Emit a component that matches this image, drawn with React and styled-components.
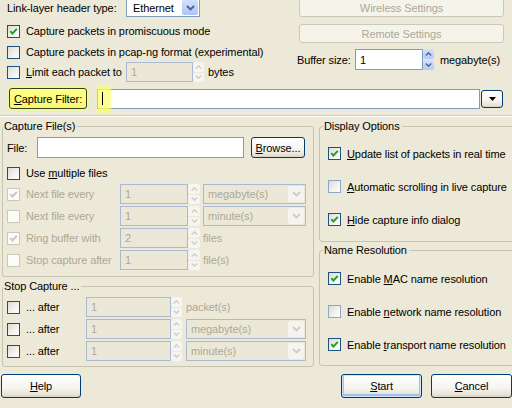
import styled, { createGlobalStyle } from "styled-components";

const GlobalStyle = createGlobalStyle`
  html, body {
    margin: 0;
    padding: 0;
    background: #ece9d8;
  }
  body {
    font-family: "Liberation Sans", Arial, sans-serif;
    font-size: 11px;
  }
`;

const Dialog = styled.div`
  width: 512px;
  height: 408px;
  overflow: hidden;
  background: #ece9d8;
  color: #000;
  font-family: "Liberation Sans", Arial, sans-serif;
  font-size: 11px;
  letter-spacing: -0.1px;
  display: flex;
  flex-direction: column;
`;

const Top = styled.div`
  display: flex;
  margin-top: -2px;
  padding: 0 8px 0 7px;
`;

const TopLeft = styled.div`
  flex: 1;
  display: flex;
  flex-direction: column;
`;

const TopRight = styled.div`
  width: 207px;
  display: flex;
  flex-direction: column;
`;

const Row = styled.div`
  display: flex;
  align-items: center;
  height: ${(p) => p.$h || 20}px;
  margin-top: ${(p) => p.$mt || 0}px;
  margin-left: ${(p) => p.$ml || 0}px;
  flex: none;
`;

const Text = styled.span`
  display: inline-block;
  width: ${(p) => (p.$w ? `${p.$w}px` : "auto")};
  margin-left: ${(p) => p.$ml || 0}px;
  color: ${(p) => (p.$disabled ? "#aca899" : "#000")};
  white-space: nowrap;
  flex: none;
`;

const Box = styled.span`
  box-sizing: border-box;
  width: 13px;
  height: 13px;
  flex: none;
  display: inline-flex;
  align-items: center;
  justify-content: center;
  border: 1px solid
    ${(p) => (p.$disabled ? "#cac8bb" : p.$faint ? "#8fa6c4" : "#1c5180")};
  background: ${(p) =>
    p.$disabled
      ? "#fbfbf8"
      : "linear-gradient(135deg, #dcdcd7 0%, #f2f1ec 55%, #ffffff 100%)"};
`;

const CheckField = styled.span`
  display: inline-flex;
  align-items: center;
  gap: 6px;
  width: ${(p) => (p.$w ? `${p.$w}px` : "auto")};
  color: ${(p) => (p.$disabled ? "#aca899" : "#000")};
  white-space: nowrap;
  flex: none;
`;

const Field = styled.div`
  box-sizing: border-box;
  width: ${(p) => p.$w}px;
  height: ${(p) => p.$h || 20}px;
  margin-left: ${(p) => p.$ml || 0}px;
  border: 1px solid ${(p) => (p.$disabled ? "#a9bad2" : "#7f9db9")};
  background: ${(p) => (p.$disabled ? "#ebe8d8" : "#fff")};
  color: ${(p) => (p.$disabled ? "#aca899" : "#000")};
  padding-left: 4px;
  display: flex;
  align-items: center;
  flex: none;
  position: relative;
`;

const ComboBox = styled(Field)`
  padding-right: 1px;
  justify-content: space-between;
`;

const ComboButton = styled.span`
  width: 16px;
  height: calc(100% - 2px);
  border-radius: 2px;
  display: flex;
  align-items: center;
  justify-content: center;
  background: ${(p) =>
    p.$disabled
      ? "#f5f4ef"
      : "linear-gradient(180deg, #d3e0fd 0%, #bccefa 60%, #aec3f5 100%)"};
`;

const SpinArrows = styled.div`
  width: ${(p) => p.$w || 11}px;
  height: ${(p) => p.$h || 20}px;
  display: flex;
  flex-direction: column;
  gap: 1px;
  flex: none;
`;

const SpinButton = styled.span`
  flex: 1;
  display: flex;
  align-items: center;
  justify-content: center;
  border-radius: 2px;
  background: ${(p) =>
    p.$disabled ? "#f6f5f1" : "linear-gradient(180deg, #d3e0fd, #b6c9f7)"};
`;

const Button = styled.button`
  box-sizing: border-box;
  width: ${(p) => p.$w}px;
  height: ${(p) => p.$h || 23}px;
  margin: 0 0 0 ${(p) => p.$ml || 0}px;
  padding: 0;
  font: inherit;
  letter-spacing: inherit;
  flex: none;
  color: ${(p) => (p.disabled ? "#aca899" : "#000")};
  border: 1px solid ${(p) => (p.disabled ? "#cbc8bb" : "#003c74")};
  border-radius: 3px;
  background: ${(p) =>
    p.disabled
      ? "#f5f4ea"
      : "linear-gradient(180deg, #ffffff 0%, #f5f4ef 60%, #e6e2d7 90%, #d6d0c5 100%)"};
  box-shadow: ${(p) =>
    p.$default ? "inset 0 0 0 1px #cee7ff, inset 0 -1px 0 2px #a3bfee" : "none"};
  display: flex;
  align-items: center;
  justify-content: center;
`;

const FilterButton = styled(Button)`
  background: linear-gradient(180deg, #ffff8c 0%, #f8f872 100%);
  border-color: #33421c;
  box-shadow: 0 0 0 2px #f3f3a6;
`;

const FilterRow = styled.div`
  display: flex;
  align-items: center;
  height: 21px;
  margin-top: 6px;
  padding-left: 9px;
`;

const Highlight = styled.span`
  position: absolute;
  left: -1px;
  top: -4px;
  width: 14px;
  height: 27px;
  background: #ffff66;
  opacity: 0.75;
  filter: blur(1px);
`;

const Caret = styled.span`
  position: absolute;
  left: 4px;
  top: 2px;
  width: 1px;
  height: 13px;
  background: #000;
`;

const Separator = styled.div`
  margin-top: 6px;
  height: 0;
  border-top: 1px solid #d0cdbd;
  border-bottom: 1px solid #ffffff;
`;

const Columns = styled.div`
  display: flex;
  gap: 5px;
  padding-left: 2px;
`;

const Column = styled.div`
  width: ${(p) => p.$w}px;
  flex: none;
  display: flex;
  flex-direction: column;
`;

const Group = styled.div`
  position: relative;
  box-sizing: border-box;
  height: ${(p) => p.$h}px;
  margin-top: ${(p) => p.$mt}px;
  border: 1px solid #c7c4b4;
  border-radius: 3px;
  padding: ${(p) => p.$pad};
  display: flex;
  flex-direction: column;
`;

const GroupTitle = styled.span`
  position: absolute;
  top: -8px;
  left: ${(p) => p.$left || 0}px;
  padding: 0 2px 0 1px;
  background: #ece9d8;
  line-height: 14px;
`;

const OptionRow = styled.div`
  height: 33px;
  display: flex;
  align-items: center;
  flex: none;
`;

const Footer = styled.div`
  display: flex;
  align-items: center;
  margin-top: 7px;
  padding-left: 1px;
`;

const Spacer = styled.div`
  flex: 1;
`;

const Chevron = ({ up, color }) => (
  <svg width="7" height="4" viewBox="0 0 7 4">
    <polyline
      points={up ? "0.8,3.4 3.5,0.8 6.2,3.4" : "0.8,0.6 3.5,3.2 6.2,0.6"}
      fill="none"
      stroke={color}
      strokeWidth="1.4"
    />
  </svg>
);

const BigChevron = ({ color }) => (
  <svg width="9" height="6" viewBox="0 0 9 6">
    <polyline
      points="1,1 4.5,4.5 8,1"
      fill="none"
      stroke={color}
      strokeWidth="1.8"
    />
  </svg>
);

const Check = ({ checked, disabled, faint }) => (
  <Box $disabled={disabled} $faint={faint}>
    {checked && (
      <svg width="9" height="9" viewBox="0 0 9 9">
        <polyline
          points="1.3,4.2 3.4,6.5 7.8,1.8"
          fill="none"
          stroke={disabled ? "#c9c7ba" : "#21a121"}
          strokeWidth="1.9"
        />
      </svg>
    )}
  </Box>
);

const Spin = ({ w, value, disabled, arrowsW, h = 20 }) => (
  <>
    <Field $w={w} $h={h} $disabled={disabled}>
      {value}
    </Field>
    <SpinArrows $w={arrowsW} $h={h}>
      <SpinButton $disabled={disabled}>
        <Chevron up color={disabled ? "#cfcdc2" : "#4d6185"} />
      </SpinButton>
      <SpinButton $disabled={disabled}>
        <Chevron color={disabled ? "#cfcdc2" : "#4d6185"} />
      </SpinButton>
    </SpinArrows>
  </>
);

const Combo = ({ w, ml, h = 20, disabled, children }) => (
  <ComboBox $w={w} $ml={ml} $h={h} $disabled={disabled}>
    <span>{children}</span>
    <ComboButton $disabled={disabled}>
      <BigChevron color={disabled ? "#cfcdc2" : "#4d6185"} />
    </ComboButton>
  </ComboBox>
);

export default function App() {
  return (
    <>
      <GlobalStyle />
      <Dialog>
        <Top>
          <TopLeft>
            <Row $h={19}>
              <Text $w={119}>Link-layer header type:</Text>
              <Combo w={74} h={19}>
                <span style={{ paddingLeft: 2 }}>Ethernet</span>
              </Combo>
            </Row>
            <Row $h={18} $mt={5}>
              <CheckField>
                <Check checked />
                Capture packets in promiscuous mode
              </CheckField>
            </Row>
            <Row $mt={2}>
              <CheckField>
                <Check />
                Capture packets in pcap-ng format (experimental)
              </CheckField>
            </Row>
            <Row>
              <CheckField $w={119}>
                <Check />
                <span>
                  <u>L</u>imit each packet to
                </span>
              </CheckField>
              <Spin w={67} value="1" disabled arrowsW={11} />
              <Text $ml={4}>bytes</Text>
            </Row>
          </TopLeft>
          <TopRight>
            <Row $h={19}>
              <Button $w={205} $h={19} $ml={2} disabled>
                Wireless Settings
              </Button>
            </Row>
            <Row $h={19} $mt={7}>
              <Button $w={205} $h={19} $ml={2} disabled>
                Remote Settings
              </Button>
            </Row>
            <Row $h={21} $mt={6}>
              <Text $w={58}>Buffer size:</Text>
              <Spin w={68} h={21} value="1" arrowsW={11} />
              <Text $ml={6}>megabyte(s)</Text>
            </Row>
          </TopRight>
        </Top>

        <FilterRow>
          <FilterButton $w={78} $h={21}>
            <span>
              <u>C</u>apture Filter:
            </span>
          </FilterButton>
          <Field $w={383} $h={20} $ml={10}>
            <Highlight />
            <Caret />
          </Field>
          <Button $w={22} $h={18} $ml={1}>
            <svg width="7" height="4" viewBox="0 0 7 4">
              <polygon points="0,0 7,0 3.5,4" fill="#000" />
            </svg>
          </Button>
        </FilterRow>

        <Separator />

        <Columns>
          <Column $w={312}>
            <Group $h={151} $mt={9} $pad="10px 0 0 4px">
              <GroupTitle>Capture File(s)</GroupTitle>
              <Row $h={21}>
                <Text $w={30}>File:</Text>
                <Field $w={207} $h={21} />
                <Button $w={54} $h={21} $ml={7}>
                  <span>
                    <u>B</u>rowse...
                  </span>
                </Button>
              </Row>
              <Row $mt={5}>
                <CheckField>
                  <Check />
                  <span>
                    Use <u>m</u>ultiple files
                  </span>
                </CheckField>
              </Row>
              <Row $mt={1}>
                <CheckField $w={113} $disabled>
                  <Check checked disabled />
                  Next file every
                </CheckField>
                <Spin w={68} value="1" disabled arrowsW={12} />
                <Combo w={103} ml={3} disabled>
                  megabyte(s)
                </Combo>
              </Row>
              <Row $mt={2}>
                <CheckField $w={113} $disabled>
                  <Check disabled />
                  Next file every
                </CheckField>
                <Spin w={68} value="1" disabled arrowsW={12} />
                <Combo w={103} ml={3} disabled>
                  minute(s)
                </Combo>
              </Row>
              <Row $mt={2}>
                <CheckField $w={113} $disabled>
                  <Check checked disabled />
                  Ring buffer with
                </CheckField>
                <Spin w={68} value="2" disabled arrowsW={12} />
                <Text $ml={3} $disabled>
                  files
                </Text>
              </Row>
              <Row $mt={2}>
                <CheckField $w={113} $disabled>
                  <Check disabled />
                  Stop capture after
                </CheckField>
                <Spin w={68} value="1" disabled arrowsW={12} />
                <Text $ml={3} $disabled>
                  file(s)
                </Text>
              </Row>
            </Group>

            <Group $h={81} $mt={9} $pad="10px 0 0 4px">
              <GroupTitle>Stop Capture ...</GroupTitle>
              <Row>
                <CheckField $w={79}>
                  <Check />
                  ... after
                </CheckField>
                <Spin w={85} value="1" disabled arrowsW={11} />
                <Text $ml={4} $disabled>
                  packet(s)
                </Text>
              </Row>
              <Row $mt={2}>
                <CheckField $w={79}>
                  <Check />
                  ... after
                </CheckField>
                <Spin w={85} value="1" disabled arrowsW={11} />
                <Combo w={120} ml={4} disabled>
                  megabyte(s)
                </Combo>
              </Row>
              <Row $mt={2}>
                <CheckField $w={79}>
                  <Check />
                  ... after
                </CheckField>
                <Spin w={85} value="1" disabled arrowsW={11} />
                <Combo w={120} ml={4} disabled>
                  minute(s)
                </Combo>
              </Row>
            </Group>
          </Column>

          <Column $w={200}>
            <Group $h={116} $mt={9} $pad="10px 0 0 8px">
              <GroupTitle $left={3}>Display Options</GroupTitle>
              <OptionRow>
                <CheckField>
                  <Check checked />
                  <span>
                    <u>U</u>pdate list of packets in real time
                  </span>
                </CheckField>
              </OptionRow>
              <OptionRow>
                <CheckField>
                  <Check faint />
                  <span>
                    <u>A</u>utomatic scrolling in live capture
                  </span>
                </CheckField>
              </OptionRow>
              <OptionRow>
                <CheckField>
                  <Check checked />
                  <span>
                    <u>H</u>ide capture info dialog
                  </span>
                </CheckField>
              </OptionRow>
            </Group>

            <Group $h={116} $mt={8} $pad="11px 0 0 8px">
              <GroupTitle $left={3}>Name Resolution</GroupTitle>
              <OptionRow>
                <CheckField>
                  <Check checked />
                  <span>
                    Enable <u>M</u>AC name resolution
                  </span>
                </CheckField>
              </OptionRow>
              <OptionRow>
                <CheckField>
                  <Check faint />
                  <span>
                    Enable <u>n</u>etwork name resolution
                  </span>
                </CheckField>
              </OptionRow>
              <OptionRow>
                <CheckField>
                  <Check checked />
                  <span>
                    Enable <u>t</u>ransport name resolution
                  </span>
                </CheckField>
              </OptionRow>
            </Group>
          </Column>
        </Columns>

        <Footer>
          <Button $w={80} $h={24}>
            <span>
              <u>H</u>elp
            </span>
          </Button>
          <Spacer />
          <Button $w={81} $h={24} $default>
            <span>
              <u>S</u>tart
            </span>
          </Button>
          <Button $w={81} $h={24} $ml={9}>
            <span>
              <u>C</u>ancel
            </span>
          </Button>
        </Footer>
      </Dialog>
    </>
  );
}
